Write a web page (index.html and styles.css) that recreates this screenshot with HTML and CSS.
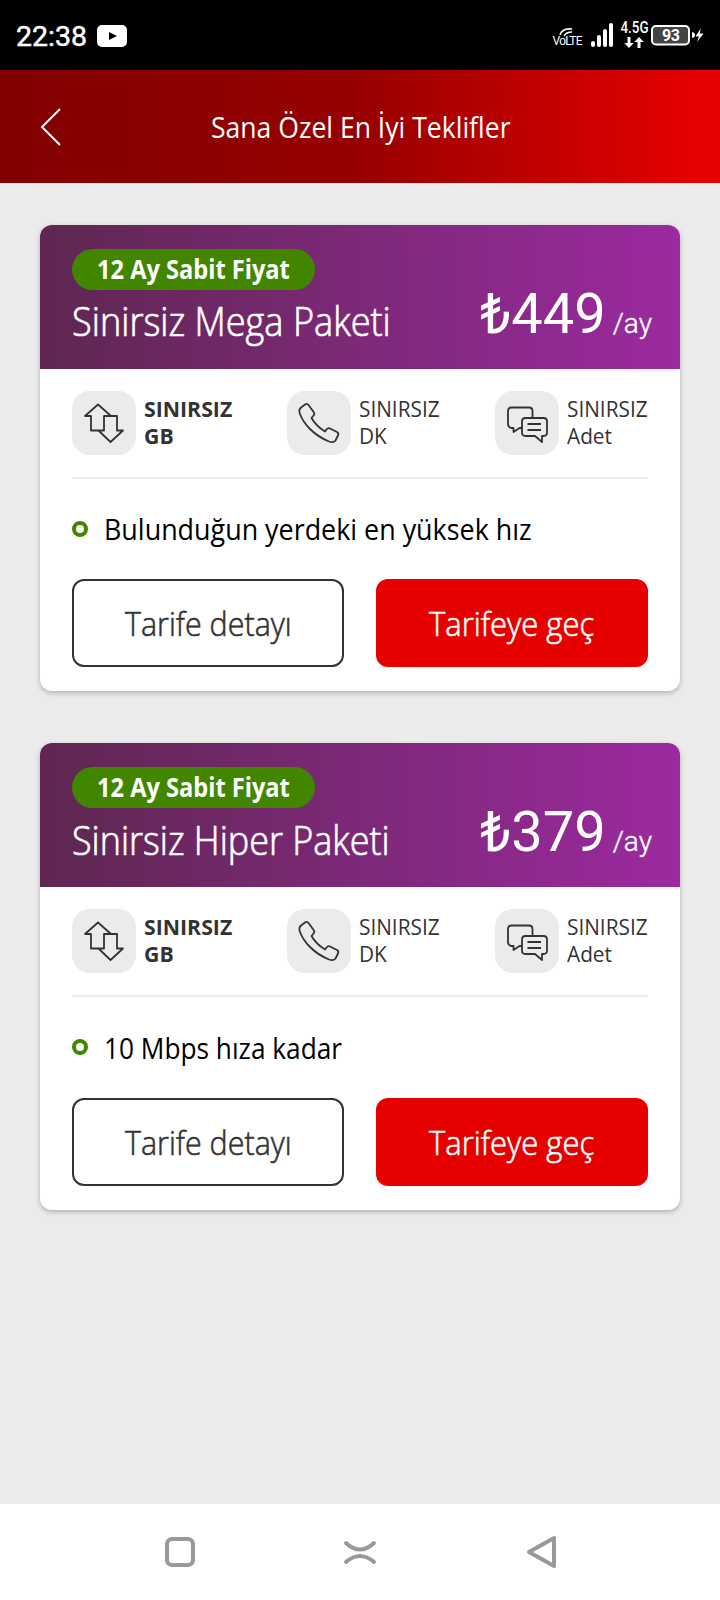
FILE: index.html
```html
<!DOCTYPE html>
<html lang="tr">
<head>
<meta charset="utf-8">
<title>Sana Özel En İyi Teklifler</title>
<link rel="stylesheet" href="styles.css">
</head>
<body>
<svg class="defs" width="0" height="0">
  <symbol id="data" viewBox="0 0 64 64"><path d="M26 13.500 13 25h6v14.500h13V25h7ZM32 25h13v14.500h6L38.500 51 26.500 39.500H32Z"/></symbol>
  <symbol id="phone" viewBox="0 0 64 64"><path d="M13 23Q11.500 19 13.500 17L18 13.500Q20 12 21.500 14L27 21.500Q28 23 26.500 24.500L24.500 27Q29 35 38 40.500L39.500 38.500Q41 36.500 43 37.500L50 41Q52 42 51 44.500L48.500 49.500Q46.500 52 42 50.500Q31 46 23 38Q16 31 13 23Z"/></symbol>
  <symbol id="chat" viewBox="0 0 64 64"><path d="M27 37h-2.500L18.500 41v-4H16q-3-1-3-4V20q0-3.500 3.500-3.500H34q3.500 0 3.500 3.500v7M30.500 27h18q3.500 0 3.500 3.500v11q0 3.500-3.500 3.500H47v6L40 45h-9.500q-3.500 0-3.500-3.500v-11q0-3.500 3.500-3.500ZM32.500 33H46M32.500 39H46"/></symbol>
</svg>
<div class="status">
  <span class="clock">22:38</span>
  <svg class="video" width="30" height="22" viewBox="0 0 30 22"><rect width="30" height="22" rx="5" fill="#fff"/><path d="M12 7v8l8-4Z" fill="#000"/></svg>
  <svg class="signals" width="156" height="40" viewBox="550 15 156 40" fill="none" stroke="#fff">
    <path d="M560 35q2-7 12-6M564 36q2-4 8-4" stroke-width="1.500"/>
    <text x="552.500" y="45" class="volte" textLength="30">VᴏLTE</text>
    <g fill="#fff" stroke="none">
      <rect x="591" y="41" width="4" height="6" rx="2"/><rect x="597" y="35" width="4" height="12" rx="2"/><rect x="603" y="29" width="4" height="18" rx="2"/><rect x="609" y="23" width="4" height="24" rx="2"/>
      <path d="M627.500 37h3v6h3.200l-4.700 5-4.700-5h3.200ZM637.500 48h3v-6h3.200l-4.700-5-4.700 5h3.200Z"/>
      <path d="M692 32q3 .5 3 3t-3 3ZM701 28l-5.500 8.500h3.500L697 42l6.500-8.500h-4Z"/>
    </g>
    <text x="620.500" y="32.500" class="net" textLength="28" lengthAdjust="spacingAndGlyphs">4.5G</text>
    <rect x="652" y="26" width="37" height="18.500" rx="4" fill="#444" stroke-width="2"/>
    <text x="662" y="41" class="level" textLength="18">93</text>
  </svg>
</div>
<header class="top">
  <svg class="back" width="22" height="38" viewBox="0 0 22 38" fill="none" stroke="#fff" stroke-width="2"><path d="M20 1 2 19l18 18"/></svg>
  <h1><span class="t-title">Sana Özel En İyi Teklifler</span></h1>
</header>
<main>
  <section class="card">
    <div class="head">
      <div class="info"><div class="badge"><span>12 Ay Sabit Fiyat</span></div><h2><span class="t-mega">Sinirsiz Mega Paketi</span></h2></div>
      <div class="price"><span class="amount">₺449</span><span class="per">/ay</span></div>
    </div>
    <div class="quota">
      <div class="item strong"><i><svg><use href="#data"/></svg></i><p>SINIRSIZ<br>GB</p></div>
      <div class="item"><i><svg><use href="#phone"/></svg></i><p>SINIRSIZ<br>DK</p></div>
      <div class="item"><i><svg><use href="#chat"/></svg></i><p>SINIRSIZ<br>Adet</p></div>
    </div>
    <div class="feature"><b></b><span class="t-speed">Bulunduğun yerdeki en yüksek hız</span></div>
    <div class="actions"><a class="btn"><span class="t-detail">Tarife detayı</span></a><a class="btn red"><span class="t-switch">Tarifeye geç</span></a></div>
  </section>
  <section class="card">
    <div class="head">
      <div class="info"><div class="badge"><span>12 Ay Sabit Fiyat</span></div><h2><span class="t-hiper">Sinirsiz Hiper Paketi</span></h2></div>
      <div class="price"><span class="amount">₺379</span><span class="per">/ay</span></div>
    </div>
    <div class="quota">
      <div class="item strong"><i><svg><use href="#data"/></svg></i><p>SINIRSIZ<br>GB</p></div>
      <div class="item"><i><svg><use href="#phone"/></svg></i><p>SINIRSIZ<br>DK</p></div>
      <div class="item"><i><svg><use href="#chat"/></svg></i><p>SINIRSIZ<br>Adet</p></div>
    </div>
    <div class="feature"><b></b><span class="t-mbps">10 Mbps hıza kadar</span></div>
    <div class="actions"><a class="btn"><span class="t-detail">Tarife detayı</span></a><a class="btn red"><span class="t-switch">Tarifeye geç</span></a></div>
  </section>
</main>
<nav>
  <svg width="32" height="32" viewBox="0 0 32 32"><rect x="3" y="3" width="26" height="26" rx="5"/></svg>
  <svg class="home" width="34" height="32" viewBox="0 0 34 32"><path d="M3 7q14 13 28 0M3 26q14-12 28 0"/></svg>
  <svg width="32" height="34" viewBox="0 0 32 34"><path d="M28 3v28L3 17Z"/></svg>
</nav>
</body>
</html>
```
FILE: styles.css
```css
* { box-sizing: border-box; }
body { margin: 0; height: 1600px; display: flex; flex-direction: column; background: #ebebeb; font-family: "Open Sans", "Noto Sans", sans-serif; color: #333; overflow: hidden; }
h1, h2, p { margin: 0; font-weight: 400; }
.defs { display: none; }
span { white-space: nowrap; }
.status { height: 70px; flex: none; background: #000; color: #fff; display: flex; align-items: center; padding: 0 14px 0 16px; }
.clock { font: 400 28.500px/40px Roboto, sans-serif; width: 81px; padding-top: 3px; -webkit-text-stroke: .5px #fff; }
.video { margin-top: 1px; }
.signals { margin-left: auto; }
.signals text { fill: #fff; stroke: none; font-family: Roboto, sans-serif; }
.volte { font-size: 12px; }
.net { font-size: 16px; font-weight: 500; }
.signals .level { font-size: 16px; font-weight: 700; }
.top { height: 112.5px; flex: none; display: flex; align-items: center; padding: 1px 0 0 40px; background: linear-gradient(90deg, #820000, #980000 50%, #e60000 97%); color: #fff; }
.top h1 { font-size: 29px; line-height: 40px; margin-left: 149px; }
main { flex: 1; padding: 42px 40px 0; display: flex; flex-direction: column; gap: 52px; }
.card { height: 466.5px; background: #fff; border-radius: 12px; box-shadow: 0 2px 5px rgba(0,0,0,.25); overflow: hidden; padding-bottom: 24px; }
.head { height: 144px; background: linear-gradient(90deg, #5e2750, #9c2aa0); color: #fff; display: flex; justify-content: space-between; padding: 24px 28px 0 32px; }
.info { width: 330px; }
.badge { width: 243px; height: 41px; border-radius: 21px; background: #428600; font-size: 26px; line-height: 41px; font-weight: 700; padding-left: 25px; }
h2 { font-size: 39.500px; line-height: 50px; font-weight: 300; margin-top: 6.500px; -webkit-text-stroke: .7px currentColor; }
.price { font-family: Roboto, sans-serif; padding-top: 33px; line-height: 64px; white-space: nowrap; display: flex; align-items: baseline; gap: 7px; }
.amount { font-size: 56px; }
.per { font-size: 28px; font-weight: 300; -webkit-text-stroke: .4px currentColor; }
.quota { margin: 0 32px; height: 110px; padding-top: 22px; border-bottom: 2px solid #ebebeb; display: flex; justify-content: space-between; }
.item { display: flex; gap: 8px; width: 160px; }
.item:first-child { width: 167px; }
.item:last-child { width: 153px; }
i { width: 64px; height: 64px; border-radius: 18px; background: #ebebeb; flex: none; }
i svg { width: 64px; height: 64px; fill: none; stroke: #333; stroke-width: 1.800; stroke-linejoin: round; display: block; }
.item p { font-size: 22px; line-height: 27px; padding-top: 4px; white-space: nowrap; transform: scaleX(.945); transform-origin: 0 0; }
.item.strong p { font-weight: 700; transform: scaleX(.967); }
.feature { margin: 0 32px; height: 100.500px; display: flex; align-items: center; gap: 16px; color: #000; font-size: 29px; }
.feature b { width: 16px; height: 16px; border: 4px solid #428600; border-radius: 50%; }
.actions { margin: 0 32px; display: flex; gap: 32px; }
.btn { flex: 1; height: 88px; border: 2px solid #333; border-radius: 12px; font-size: 32.500px; line-height: 85px; padding-left: 51px; font-weight: 300; -webkit-text-stroke: .6px currentColor; }
.red { background: #e60000; border-color: #e60000; color: #fff; }
/* Condensed lettering: each label is narrowed from its left edge. */
.badge span, h1 span, h2 span, .feature span, .btn span { display: inline-block; transform-origin: 0 50%; }
.badge span { transform: scaleX(.908); }
.t-title { transform: scaleX(.916); }
.t-mega { transform: scaleX(.915); }
.t-hiper { transform: scaleX(.91); }
.feature .t-speed { transform: scaleX(.927); }
.feature .t-mbps { transform: scaleX(.905); }
.t-detail { transform: scaleX(.937); }
.t-switch { transform: scaleX(.953); }
nav { height: 96px; flex: none; background: #fff; display: flex; justify-content: space-between; align-items: center; padding: 0 162px 0 164px; }
.home { margin-right: 2px; }
nav svg { fill: none; stroke: #999; stroke-width: 4; stroke-linecap: round; stroke-linejoin: round; }
```
